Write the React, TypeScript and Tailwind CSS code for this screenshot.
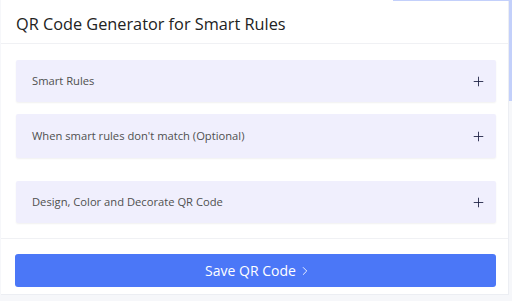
import { Plus, ChevronRight } from "lucide-react";

const sections = [
    { title: "Smart Rules", h: "h-[42px]", mt: "mt-[16px]" },
    { title: "When smart rules don't match (Optional)", h: "h-[44px]", mt: "mt-[12px]" },
    { title: "Design, Color and Decorate QR Code", h: "h-[42px]", mt: "mt-[23px]" },
];

export default function App() {
    return (
        <div className="w-[512px] h-[301px] bg-[#f6f7fa] font-['Open_Sans',sans-serif] relative overflow-hidden">
            <div className="absolute top-0 left-[393px] right-0 h-px bg-[#c3d0fb]" />
            <div className="absolute top-0 right-0 bottom-[200px] w-[3px] bg-[#c3d0fb]" />
            <div className="ml-px mr-[3px] h-[295px] bg-white border-r border-b border-[#eceef3] flex flex-col">
                <div className="h-[44px] flex items-center pt-[5px] px-[15px] border-b border-[#f0f1f4]">
                    <h1 className="text-[16.3px] text-[#222] leading-none">QR Code Generator for Smart Rules</h1>
                </div>
                <div className="pl-[15px] pr-[12px] pb-[15px] border-b border-[#f0f1f4]">
                    {sections.map((s) => (
                        <div
                            key={s.title}
                            className={`${s.h} ${s.mt} bg-[#f0effd] rounded-[2px] shadow-[0_1px_2px_rgba(0,0,0,0.06)] flex items-center justify-between pl-[16px] pr-[10px]`}
                        >
                            <span className="text-[11.2px] font-medium text-[#4f4f4f]">{s.title}</span>
                            <Plus size={15} strokeWidth={1.4} className="text-[#1f2245]" />
                        </div>
                    ))}
                </div>
                <div className="pl-[14px] pr-[12px] pt-[15px]">
                    <button className="w-full h-[33px] bg-[#4b77f7] rounded-[3px] text-white text-[14px] flex items-center justify-center gap-[2px] pl-[6px]">
                        Save QR Code
                        <ChevronRight size={14} strokeWidth={1.5} />
                    </button>
                </div>
            </div>
        </div>
    );
}
